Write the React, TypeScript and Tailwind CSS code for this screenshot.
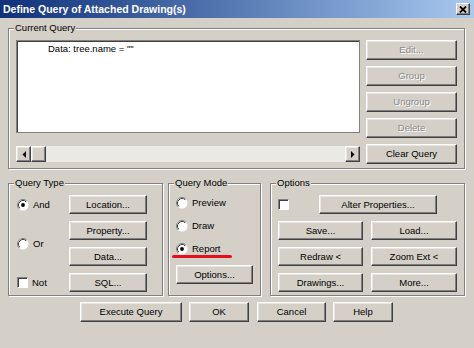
import React from 'react'

function Btn({
  children,
  className = '',
  disabled = false,
}: {
  children?: React.ReactNode
  className?: string
  disabled?: boolean
}) {
  return (
    <div
      className={`flex items-center justify-center bg-[#d4d0c8] border border-t-white border-l-white border-r-[#404040] border-b-[#404040] shadow-[inset_-1px_-1px_0_#808080,inset_1px_1px_0_#e8e6e1] text-[9.5px] leading-none whitespace-nowrap ${
        disabled ? 'text-[#8a8a8a] [text-shadow:1px_1px_0_#fff]' : 'text-black'
      } ${className}`}
    >
      {children}
    </div>
  )
}

function GroupBox({
  label,
  className = '',
  children,
}: {
  label: string
  className?: string
  children?: React.ReactNode
}) {
  return (
    <div className={`relative border border-[#808080] shadow-[inset_1px_1px_0_#fff,1px_1px_0_#fff] ${className}`}>
      <span className="absolute left-[5px] top-[-7px] px-[1px] bg-[#d4d0c8] text-[9.5px] leading-[12px] text-black">
        {label}
      </span>
      {children}
    </div>
  )
}

function Radio({ label, checked = false }: { label: string; checked?: boolean }) {
  return (
    <div className="flex items-center gap-[4px] h-[14px]">
      <svg width="12" height="12" viewBox="0 0 12 12">
        <circle cx="6" cy="6" r="5.5" fill="#fff" />
        <path d="M2.11 9.89 A5.5 5.5 0 0 1 9.89 2.11" fill="none" stroke="#808080" strokeWidth="1" />
        <path d="M2.82 9.18 A4.5 4.5 0 0 1 9.18 2.82" fill="none" stroke="#404040" strokeWidth="1" />
        {checked && <circle cx="6" cy="6" r="1.9" fill="#000" />}
      </svg>
      <span className="text-[9.5px] leading-none text-black">{label}</span>
    </div>
  )
}

function Checkbox() {
  return (
    <div className="w-[11px] h-[11px] bg-white border border-t-[#808080] border-l-[#808080] border-b-white border-r-white shadow-[inset_1px_1px_0_#404040]" />
  )
}

export default function App() {
  return (
    <div className="w-[474px] h-[348px] bg-[#d4d0c8] flex flex-col overflow-hidden font-['Liberation_Sans',Arial,sans-serif]">
      {/* Title bar */}
      <div className="h-[18px] flex items-center justify-between pl-[3px] pr-[4px] bg-gradient-to-r from-[#10307a] to-[#a9c9ef]">
        <span className="text-white font-bold text-[10.5px] leading-none">Define Query of Attached Drawing(s)</span>
        <div className="w-[14px] h-[12px] flex items-center justify-center bg-[#d4d0c8] border border-t-white border-l-white border-r-[#404040] border-b-[#404040] shadow-[inset_-1px_-1px_0_#808080]">
          <svg width="8" height="7" viewBox="0 0 8 7">
            <path d="M1 0.5 L7 6.5 M7 0.5 L1 6.5" stroke="#000" strokeWidth="1.8" />
          </svg>
        </div>
      </div>

      <div className="pl-[8px] pr-[9px] pt-[10px] flex flex-col">
        {/* Current Query */}
        <GroupBox label="Current Query" className="h-[141px] flex pt-[11px] pl-[7px]">
          <div className="w-[344px] flex flex-col">
            <div className="h-[93px] bg-white border border-[#808080] shadow-[inset_1px_1px_0_#404040] pl-[31px] pt-[3px] text-[9.5px] leading-none text-black">
              Data: tree.name = ""
            </div>
            <div className="mt-[13px] h-[16px] flex bg-[#ebe9e3]">
              <Btn className="w-[15px] h-[16px]">
                <svg width="4" height="7" viewBox="0 0 4 7">
                  <polygon points="4,0 4,7 0.5,3.5" fill="#000" />
                </svg>
              </Btn>
              <Btn className="w-[15px] h-[16px]" />
              <div className="flex-1" />
              <Btn className="w-[15px] h-[16px]">
                <svg width="4" height="7" viewBox="0 0 4 7">
                  <polygon points="0,0 0,7 3.5,3.5" fill="#000" />
                </svg>
              </Btn>
            </div>
          </div>
          <div className="ml-[6px] w-[91px] flex flex-col gap-[6px]">
            <Btn disabled className="h-[20px]">Edit...</Btn>
            <Btn disabled className="h-[20px]">Group</Btn>
            <Btn disabled className="h-[20px]">Ungroup</Btn>
            <Btn disabled className="h-[20px]">Delete</Btn>
            <Btn className="h-[20px]">Clear Query</Btn>
          </div>
        </GroupBox>

        {/* Lower groups */}
        <div className="mt-[14px] flex h-[113px]">
          <GroupBox label="Query Type" className="w-[155px] pt-[11px] pl-[8px]">
            <div className="grid grid-cols-[52px_78px] grid-rows-[19px_19px_19px_19px] gap-y-[7px]">
              <div className="flex items-center">
                <Radio label="And" checked />
              </div>
              <Btn className="h-[19px]">Location...</Btn>
              <div className="row-span-2 flex items-center">
                <Radio label="Or" />
              </div>
              <Btn className="h-[19px]">Property...</Btn>
              <Btn className="h-[19px]">Data...</Btn>
              <div className="flex items-center gap-[4px]">
                <Checkbox />
                <span className="text-[9.5px] leading-none text-black">Not</span>
              </div>
              <Btn className="h-[19px]">SQL...</Btn>
            </div>
          </GroupBox>

          <GroupBox label="Query Mode" className="ml-[5px] w-[93px] pt-[12px] pl-[7px]">
            <div className="flex flex-col gap-[9px]">
              <Radio label="Preview" />
              <Radio label="Draw" />
              <Radio label="Report" checked />
              <Btn className="w-[77px] h-[19px]">Options...</Btn>
            </div>
            <div className="absolute left-[3px] top-[71px] w-[60px] h-[3px] rounded-full bg-[#e5101c]" />
          </GroupBox>

          <GroupBox label="Options" className="ml-[9px] w-[195px] pt-[11px] pl-[7px]">
            <div className="flex flex-col gap-[7px]">
              <div className="flex items-center h-[19px]">
                <Checkbox />
                <Btn className="ml-[30px] w-[118px] h-[19px]">Alter Properties...</Btn>
              </div>
              <div className="flex gap-[8px]">
                <Btn className="w-[85px] h-[19px]">Save...</Btn>
                <Btn className="w-[86px] h-[19px]">Load...</Btn>
              </div>
              <div className="flex gap-[8px]">
                <Btn className="w-[85px] h-[19px]">Redraw &lt;</Btn>
                <Btn className="w-[86px] h-[19px]">Zoom Ext &lt;</Btn>
              </div>
              <div className="flex gap-[8px]">
                <Btn className="w-[85px] h-[19px]">Drawings...</Btn>
                <Btn className="w-[86px] h-[19px]">More...</Btn>
              </div>
            </div>
          </GroupBox>
        </div>

        {/* Bottom buttons */}
        <div className="mt-[6px] pl-[72px] flex">
          <Btn className="w-[102px] h-[20px]">Execute Query</Btn>
          <Btn className="ml-[7px] w-[60px] h-[20px]">OK</Btn>
          <Btn className="ml-[8px] w-[69px] h-[20px]">Cancel</Btn>
          <Btn className="ml-[7px] w-[60px] h-[20px]">Help</Btn>
        </div>
      </div>
    </div>
  )
}
